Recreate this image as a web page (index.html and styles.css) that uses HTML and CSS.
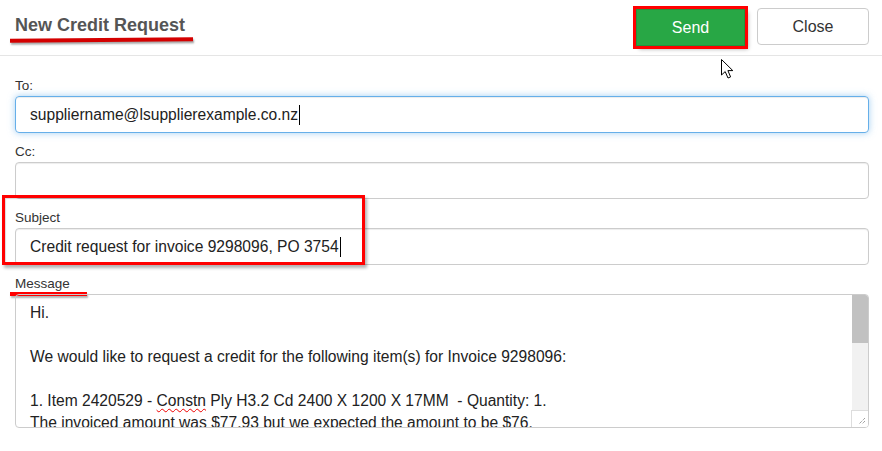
FILE: index.html
```html
<!DOCTYPE html>
<html>
<head>
<meta charset="utf-8">
<link rel="stylesheet" href="styles.css">
</head>
<body>
<div class="dialog">
  <div class="header">
    <h1 class="title"><span class="title-text">New Credit Request</span></h1>
    <div class="actions">
      <button class="btn btn-send">Send</button>
      <button class="btn btn-close">Close</button>
    </div>
    <svg class="pointer" width="16" height="22" viewBox="0 0 16 22">
      <path d="M1.5 1.5 L1.5 17 L5.2 13.6 L8 20 L10.6 18.9 L7.9 12.6 L12.8 12.6 Z" fill="#fff" stroke="#000" stroke-width="1" stroke-linejoin="round"/>
    </svg>
  </div>
  <div class="form">
    <div class="group">
      <div class="label">To:</div>
      <div class="field focused">suppliername@lsupplierexample.co.nz<span class="caret"></span></div>
    </div>
    <div class="group">
      <div class="label">Cc:</div>
      <div class="field"></div>
    </div>
    <div class="group subject">
      <div class="label">Subject</div>
      <div class="field">Credit request for invoice 9298096, PO 3754<span class="caret"></span></div>
      <div class="mark-box"></div>
    </div>
    <div class="group message">
      <div class="label"><span class="msg-label">Message</span></div>
      <div class="textarea">
        <div class="ta-text">
          <p>Hi.</p>
          <p>&nbsp;</p>
          <p>We would like to request a credit for the following item(s) for Invoice 9298096:</p>
          <p>&nbsp;</p>
          <p>1. Item 2420529 - <span class="spell">Constn</span> Ply H3.2 Cd 2400 X 1200 X 17MM&nbsp; - Quantity: 1.</p>
          <p>The invoiced amount was $77.93 but we expected the amount to be $76.</p>
        </div>
        <div class="scrollbar"><div class="thumb"></div></div>
        <div class="resizer">
          <svg width="10" height="10" viewBox="0 0 10 10"><path d="M9 3 L3 9 M9 6 L6 9" stroke="#777" stroke-width="1" stroke-dasharray="1 1"/></svg>
        </div>
      </div>
    </div>
  </div>
</div>
</body>
</html>
```
FILE: styles.css
```css
* { box-sizing: border-box; }
html, body { margin: 0; padding: 0; background: #fff; }
body {
  font-family: "Liberation Sans", Arial, sans-serif;
  color: #333;
  width: 882px;
  height: 451px;
  overflow: hidden;
}
.dialog { width: 882px; }
.header {
  position: relative;
  height: 56px;
  border-bottom: 1px solid #e5e5e5;
  display: flex;
  align-items: flex-start;
  justify-content: space-between;
  padding: 0 13px 0 15px;
}
.title {
  margin: 0;
  padding-top: 15px;
  font-size: 18px;
  font-weight: bold;
  color: #555;
  line-height: 21px;
}
.title-text { position: relative; }
.title-text::after {
  content: "";
  position: absolute;
  left: -5px;
  right: -8px;
  top: 23px;
  height: 4px;
  background: #d40000;
  box-shadow: 1px 2px 2px rgba(0,0,0,0.35);
  transform: rotate(-0.4deg);
}
.actions {
  display: flex;
  gap: 12px;
  padding-top: 9px;
}
.btn {
  font-family: "Liberation Sans", Arial, sans-serif;
  font-size: 16px;
  height: 37px;
  border-radius: 4px;
  padding: 0;
  line-height: 35px;
}
.btn-send {
  width: 109px;
  background: #28a745;
  color: #fff;
  border: 1px solid #23923d;
  outline: 3px solid #f00;
  outline-offset: 0;
  box-shadow: 3px 3px 4px rgba(0,0,0,0.35);
  border-radius: 0;
  margin-top: 0;
  height: 37px;
  line-height: 33px;
}
.btn-close {
  width: 112px;
  background: #fff;
  color: #333;
  border: 1px solid #ccc;
  margin-top: -1px;
}
.pointer {
  position: absolute;
  left: 720px;
  top: 58px;
}
.form {
  padding: 21px 13px 0 15px;
}
.group {
  position: relative;
  margin-bottom: 10px;
}
.label {
  font-size: 13.5px;
  line-height: 17px;
  margin-bottom: 2px;
  color: #333;
}
.field {
  height: 37px;
  border: 1px solid #ccc;
  border-radius: 4px;
  padding: 0 14px;
  font-size: 15.6px;
  line-height: 35px;
  color: #222;
  box-shadow: inset 0 1px 1px rgba(0,0,0,0.075);
  white-space: nowrap;
}
.field.focused {
  border-color: #66afe9;
  box-shadow: inset 0 1px 1px rgba(0,0,0,0.075), 0 0 7px rgba(102,175,233,0.6);
}
.caret {
  display: inline-block;
  width: 1px;
  height: 20px;
  background: #000;
  vertical-align: -5px;
  margin-left: 1px;
}
.mark-box {
  position: absolute;
  left: -13px;
  top: -14px;
  width: 363px;
  height: 70px;
  border: 3px solid #f00;
  box-shadow: 2px 3px 3px rgba(0,0,0,0.3), inset 1px 1px 1px rgba(0,0,0,0.15);
  pointer-events: none;
}
.group.subject { margin-bottom: 10px; }
.msg-label { position: relative; }
.msg-label::after {
  content: "";
  position: absolute;
  left: -5px;
  right: -17px;
  top: 16px;
  height: 4px;
  background: #f00;
  box-shadow: 1px 2px 2px rgba(0,0,0,0.3);
}
.message .label { margin-bottom: 2px; }
.textarea {
  position: relative;
  height: 134px;
  border: 1px solid #ccc;
  border-radius: 4px;
  overflow: hidden;
}
.ta-text {
  padding: 7px 20px 0 14px;
  font-size: 15.6px;
  line-height: 22px;
  color: #222;
}
.ta-text p { margin: 0; white-space: nowrap; }
.spell {
  text-decoration: underline wavy #e00;
  text-decoration-thickness: 1px;
  text-decoration-skip-ink: none;
  text-underline-offset: 2px;
}
.scrollbar {
  position: absolute;
  right: 0;
  top: 0;
  bottom: 0;
  width: 16px;
  background: #f1f1f1;
}
.thumb {
  height: 48px;
  background: #c1c1c1;
}
.resizer {
  position: absolute;
  right: 0;
  bottom: 0;
  width: 17px;
  height: 17px;
  background: #fff;
  border-left: 1px solid #ddd;
  border-top: 1px solid #ddd;
  display: flex;
  align-items: flex-end;
  justify-content: flex-end;
  padding: 0 2px 2px 0;
}
.resizer svg { display: block; }
```
